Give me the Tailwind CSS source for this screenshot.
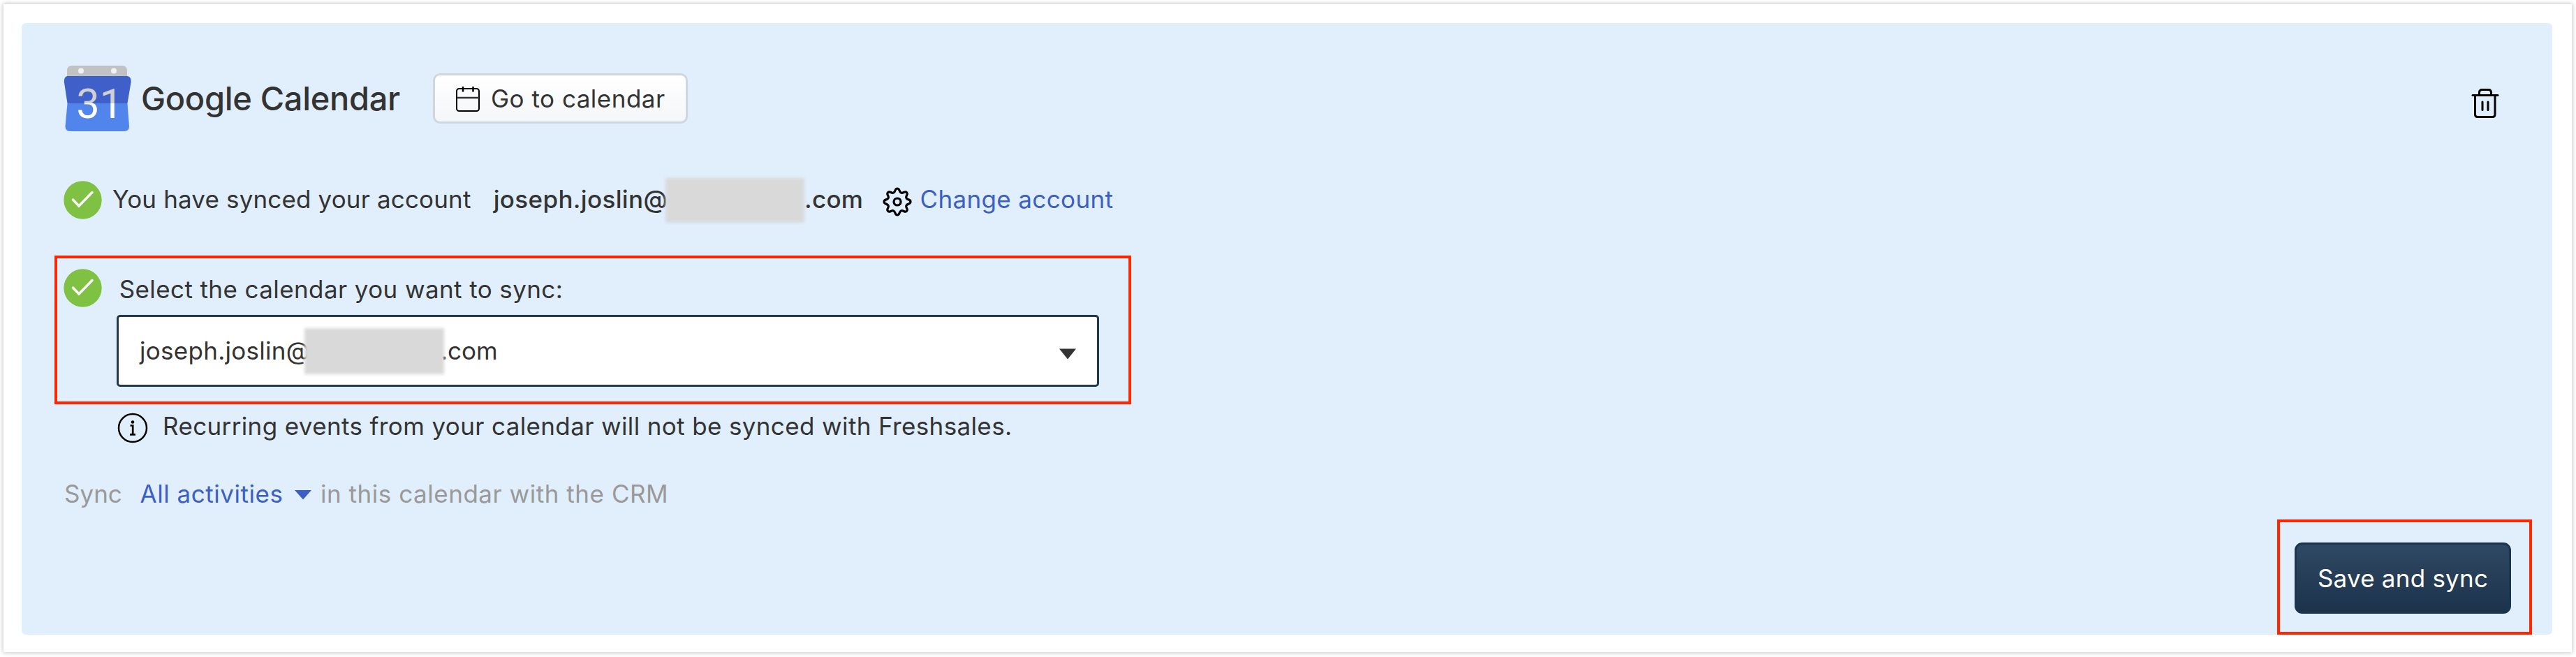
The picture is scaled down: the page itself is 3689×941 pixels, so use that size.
<!DOCTYPE html>
<html lang="en">
<head>
    <meta charset="UTF-8">
    <meta name="viewport" content="width=device-width, initial-scale=1.0">
    <title>Google Calendar sync</title>
    <!-- Tailwind CSS CDN -->
    <script src="https://cdn.jsdelivr.net/npm/@tailwindcss/browser@4"></script>
</head>
<body class="h-[941px] bg-white pt-[6px] pr-[6px] pb-[7px] pl-[5px] font-['Inter',sans-serif] text-[35px] leading-[44px] text-[#333] overflow-hidden">
    <div class="h-[928px] bg-white pt-[27px] pl-[26px] pr-[28px] shadow-[0_0_6px_1px_rgba(0,0,0,0.22)]">
        <section class="h-[876px] rounded-[6px] bg-[#e1effd] pt-[60px] pl-[60px] pr-[59px] flex flex-col whitespace-nowrap">

            <!-- Header -->
            <header class="flex items-center h-24">
                <svg class="w-[98px] h-24 shrink-0" viewBox="0 0 98 96">
                    <defs>
                        <linearGradient id="fold" gradientUnits="userSpaceOnUse" x1="0" y1="0" x2="0" y2="96">
                            <stop offset="0.574" stop-color="#cfd0d4" />
                            <stop offset="0.574" stop-color="#fff" />
                        </linearGradient>
                    </defs>
                    <path d="M5 18V8q0-7 7-7h72q7 0 7 7v10z" fill="#c2c2c2" />
                    <ellipse cx="25" cy="8.500" rx="4" ry="4" fill="#f1f1f1" />
                    <ellipse cx="72" cy="8.500" rx="4" ry="4" fill="#f1f1f1" />
                    <path d="M5 16h87q5 2 4.700 8L91.500 55.100H5.500L.8 24Q.4 18 5 16z" fill="#3f60c8" />
                    <path d="M5.500 55.100h86L94 88q0 7-7 7H9.500q-7 0-7-7z" fill="#5185ec" />
                    <text x="18.500" y="76" font-family="Roboto" font-weight="400" font-size="59" fill="url(#fold)">31</text>
                </svg>
                <h1 class="ml-[13px] w-[418px] text-[47px] leading-[56px] font-medium tracking-[-0.33px]">Google Calendar</h1>
                <button class="flex items-center w-[365px] h-[72px] rounded-[10px] border-[3px] border-[#cfd6de] bg-linear-to-b from-white to-[#f4f6f9] pl-[29px]">
                    <svg class="w-9 h-[38px] mt-px" viewBox="0 0 36 38" fill="none" stroke="#000" stroke-width="2">
                        <rect x="2" y="4" width="32" height="32" rx="3.500" />
                        <path d="M11 1v7.500M25.500 1v7.500" stroke-width="2.500" />
                        <path d="M2 17h32" stroke="#333" stroke-width="2.500" />
                    </svg>
                    <span class="ml-[15px] tracking-[0.5px]">Go to calendar</span>
                </button>
                <button class="ml-auto mr-4 mt-3">
                    <svg class="w-[42px] h-[44px]" viewBox="0 0 42 44" fill="none" stroke="#000" stroke-width="3" stroke-linecap="round" stroke-linejoin="round">
                        <path d="M3 11.500h36" />
                        <path d="M12.500 11V7.500q0-4 4-4h9q4 0 4 4V11" />
                        <path d="M6.500 12v27q0 3.500 3.500 3.500h21.500q3.500 0 3.500-3.500V12" />
                        <path d="M17 21v11.500M25 21v11.500" />
                    </svg>
                </button>
            </header>

            <!-- Synced account -->
            <div class="flex items-center h-16 mt-[65px]">
                <svg class="w-[55px] h-[55px] shrink-0" viewBox="0 0 55 55">
                    <circle cx="27.500" cy="27.500" r="27.200" fill="#7fc142" />
                    <path d="M13.500 27l8.500 9 19-19.500" fill="none" stroke="#fff" stroke-width="3.500" stroke-linecap="round" stroke-linejoin="miter" />
                </svg>
                <span class="ml-[15px] mb-0.5 w-[545.7px] tracking-[0.15px]">You have synced your account</span>
                <span class="mb-0.5 w-[246.3px] font-medium tracking-[0.35px]">joseph.joslin@</span>
                <span class="relative w-[199px] h-16 mt-px bg-[#d9d9d9] blur-[2px]"></span>
                <span class="mb-0.5 w-[111.500px] font-medium tracking-[0.3px]">.com</span>
                <svg class="w-11 h-11 mt-1.5" viewBox="-22 -22 44 44" fill="none" stroke="#000" stroke-width="3.200">
                    <path d="M0-19C4-19 2.200-14.200 5.400-12.900S10.600-16.200 13.400-13.400 11.600-8.600 12.900-5.400 19-4 19 0 14.200 2.200 12.900 5.400 16.200 10.600 13.400 13.400 8.600 11.600 5.400 12.900 4 19 0 19-2.200 14.200-5.400 12.900-10.600 16.200-13.400 13.400-11.600 8.600-12.900 5.400-19 4-19 0-14.200-2.200-12.900-5.400-16.200-10.600-13.400-13.400-8.600-11.600-5.400-12.900-4-19 0-19z" />
                    <circle r="5" />
                </svg>
                <a class="ml-[10px] mb-0.5 tracking-[0.36px] text-[#3c5fc4]">Change account</a>
            </div>

            <!-- Calendar picker -->
            <div class="relative mt-[67px]">
                <div class="flex items-center h-14">
                    <svg class="w-[55px] h-[55px] mb-px shrink-0" viewBox="0 0 55 55">
                        <circle cx="27.500" cy="27.500" r="27.200" fill="#7fc142" />
                        <path d="M13.500 27l8.500 9 19-19.500" fill="none" stroke="#fff" stroke-width="3.500" stroke-linecap="round" stroke-linejoin="miter" />
                    </svg>
                    <label class="ml-[24.7px] pt-0.5 tracking-[0.4px]">Select the calendar you want to sync:</label>
                </div>
                <div class="mt-[10px] ml-[76px] w-[1407px] h-[103px] flex items-center rounded-[5px] border-[3px] border-[#20394f] bg-white pl-[30px] pr-[30px]">
                    <span class="mb-0.5 w-[236px] tracking-[0.28px]">joseph.joslin@</span>
                    <span class="relative w-[200px] h-[66px] bg-[#d9d9d9] blur-[2px]"></span>
                    <span class="-ml-[5px] mb-0.5">.com</span>
                    <svg class="ml-auto w-6 h-4 mt-2" viewBox="0 0 24 16"><path d="M0 .5h24L12 15.500z" fill="#333" /></svg>
                </div>
                <div class="absolute -left-[13px] -top-[19px] w-[1542px] h-[213px] border-4 border-[#ff2600]"></div>
            </div>

            <div class="flex h-11 mt-[34px] ml-[77px]">
                <svg class="w-11 h-11 mt-[3px] shrink-0" viewBox="0 0 44 44" fill="none" stroke="#000" stroke-width="2.500">
                    <circle cx="22" cy="22" r="20" />
                    <path d="M18.500 18.500h3.700v12M18 31.300h8" stroke-width="2.700" />
                    <circle cx="22" cy="13.500" r="2.300" fill="#000" stroke="none" />
                </svg>
                <span class="ml-[21px] tracking-[0.37px]">Recurring events from your calendar will not be synced with Freshsales.</span>
            </div>

            <!-- Activity filter -->
            <div class="flex items-center h-11 mt-[53px] text-[#999]">
                <span class="w-[109.500px] pl-px">Sync</span>
                <a class="w-[221.500px] tracking-[0.54px] text-[#3c5fc4]">All activities</a>
                <svg class="w-6 h-[14px] mt-[3px]" viewBox="0 0 24 14"><path d="M0 0h24L12 13.500z" fill="#3c5fc4" /></svg>
                <span class="ml-[13px] tracking-[0.53px]">in this calendar with the CRM</span>
            </div>

            <div class="relative self-end mt-12">
                <button class="block w-[310px] h-[102px] rounded-[11px] border-[3px] border-[#1c354f] bg-linear-to-b from-[#2f4863] to-[#1c334c] text-white tracking-[0.23px]">Save and sync</button>
                <div class="absolute -left-[25px] -top-[33px] w-[365px] h-[165px] border-4 border-[#ff2600]"></div>
            </div>
        </section>
    </div>
</body>
</html>
